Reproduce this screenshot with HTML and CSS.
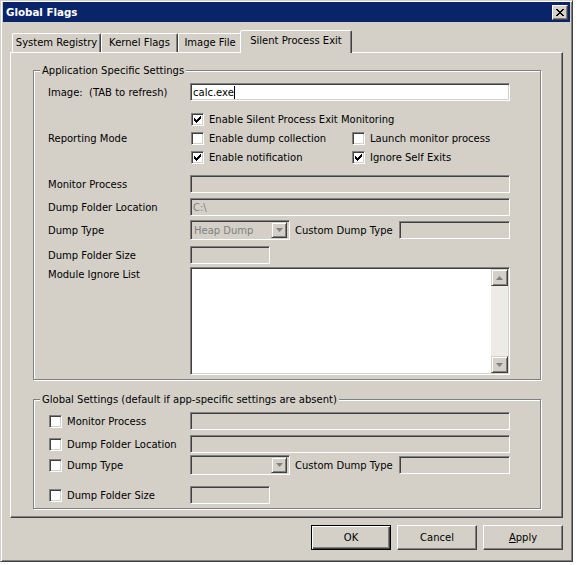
FILE: index.html
```html
<!DOCTYPE html>
<html lang="en">
<head>
<meta charset="utf-8">
<title>Global Flags</title>
<link rel="stylesheet" href="styles.css">
</head>
<body>
<div class="window">
  <div class="titlebar">
    <span class="title">Global Flags</span>
    <span class="close"><svg width="8" height="7" viewBox="0 0 8 7" shape-rendering="crispEdges"><path d="M0 0h2v1h1v1h2V1h1V0h2v1H7v1H6v1H5v1h1v1h1v1h1v1H6V6H5V5H3v1H2v1H0V6h1V5h1V4h1V3H2V2H1V1H0z"/></svg></span>
  </div>

  <div class="tabs">
    <div class="tab tab-system">System Registry</div>
    <div class="tab tab-kernel">Kernel Flags</div>
    <div class="tab tab-image">Image File</div>
    <div class="tab active">Silent Process Exit</div>
  </div>

  <div class="panel">
    <div class="group">
      <div class="group-title">Application Specific Settings</div>

      <div class="row r-image">
        <span class="lbl">Image:&nbsp; (TAB to refresh)</span>
        <div class="field white w-full"><span class="value">calc.exe</span><span class="caret"></span></div>
      </div>

      <div class="row r-report">
        <span class="lbl">Reporting Mode</span>
        <div class="checks">
          <div class="check span"><span class="cb"><svg class="tick" width="7" height="7" viewBox="0 0 7 7" shape-rendering="crispEdges"><polygon points="0,2 1,2 1,3 2,3 2,4 3,4 3,3 4,3 4,2 5,2 5,1 6,1 6,0 7,0 7,3 6,3 6,4 5,4 5,5 4,5 4,6 3,6 3,7 2,7 2,6 1,6 1,5 0,5"/></svg></span>Enable Silent Process Exit Monitoring</div>
          <div class="check"><span class="cb"></span>Enable dump collection</div>
          <div class="check"><span class="cb"></span>Launch monitor process</div>
          <div class="check"><span class="cb"><svg class="tick" width="7" height="7" viewBox="0 0 7 7" shape-rendering="crispEdges"><polygon points="0,2 1,2 1,3 2,3 2,4 3,4 3,3 4,3 4,2 5,2 5,1 6,1 6,0 7,0 7,3 6,3 6,4 5,4 5,5 4,5 4,6 3,6 3,7 2,7 2,6 1,6 1,5 0,5"/></svg></span>Enable notification</div>
          <div class="check"><span class="cb"><svg class="tick" width="7" height="7" viewBox="0 0 7 7" shape-rendering="crispEdges"><polygon points="0,2 1,2 1,3 2,3 2,4 3,4 3,3 4,3 4,2 5,2 5,1 6,1 6,0 7,0 7,3 6,3 6,4 5,4 5,5 4,5 4,6 3,6 3,7 2,7 2,6 1,6 1,5 0,5"/></svg></span>Ignore Self Exits</div>
        </div>
      </div>

      <div class="row r-monitor">
        <span class="lbl">Monitor Process</span>
        <div class="field w-full"></div>
      </div>

      <div class="row r-folder">
        <span class="lbl">Dump Folder Location</span>
        <div class="field w-full disabled-text"><span class="value">C:\</span></div>
      </div>

      <div class="row r-type">
        <span class="lbl">Dump Type</span>
        <div class="combo"><span class="value">Heap Dump</span><span class="drop"><svg width="7" height="4" viewBox="0 0 7 4"><polygon points="0,0 7,0 3.5,4" fill="#808080"/></svg></span></div>
        <span class="custom-lbl">Custom Dump Type</span>
        <div class="field w-custom"></div>
      </div>

      <div class="row r-size">
        <span class="lbl">Dump Folder Size</span>
        <div class="field w-size"></div>
      </div>

      <div class="row r-module">
        <span class="lbl">Module Ignore List</span>
        <div class="listbox">
          <div class="scrollbar">
            <span class="sb-btn"><svg width="7" height="4" viewBox="0 0 7 4"><polygon points="3.5,0 7,4 0,4" fill="#808080"/></svg></span>
            <span class="sb-track"></span>
            <span class="sb-btn"><svg width="7" height="4" viewBox="0 0 7 4"><polygon points="0,0 7,0 3.5,4" fill="#808080"/></svg></span>
          </div>
        </div>
      </div>
    </div>

    <div class="group">
      <div class="group-title">Global Settings (default if app-specific settings are absent)</div>

      <div class="row g-monitor">
        <span class="lbl with-cb"><span class="cb"></span>Monitor Process</span>
        <div class="field w-full"></div>
      </div>

      <div class="row g-folder">
        <span class="lbl with-cb"><span class="cb"></span>Dump Folder Location</span>
        <div class="field w-full"></div>
      </div>

      <div class="row g-type">
        <span class="lbl with-cb"><span class="cb"></span>Dump Type</span>
        <div class="combo"><span class="value"></span><span class="drop"><svg width="7" height="4" viewBox="0 0 7 4"><polygon points="0,0 7,0 3.5,4" fill="#808080"/></svg></span></div>
        <span class="custom-lbl">Custom Dump Type</span>
        <div class="field w-custom"></div>
      </div>

      <div class="row g-size">
        <span class="lbl with-cb"><span class="cb"></span>Dump Folder Size</span>
        <div class="field w-size"></div>
      </div>
    </div>
  </div>

  <div class="buttons">
    <div class="btn default">OK</div>
    <div class="btn">Cancel</div>
    <div class="btn"><span><u>A</u>pply</span></div>
  </div>
</div>
</body>
</html>
```

FILE: styles.css
```css
* { box-sizing: border-box; }

html, body {
  margin: 0;
  padding: 0;
}

body {
  background: #ffffff;
  font-family: "DejaVu Sans", Tahoma, Verdana, sans-serif;
  font-size: 10px;
  color: #000;
}

/* window frame */
.window {
  width: 573px;
  height: 562px;
  background: #d4d0c8;
  border: 1px solid;
  border-color: #d4d0c8 #404040 #404040 #d4d0c8;
  box-shadow: inset 1px 1px #ffffff, inset -1px -1px #808080;
  padding: 1px 2px 2px 2px;
  display: flex;
  flex-direction: column;
}

.titlebar {
  height: 20px;
  background: #0a246a;
  display: flex;
  align-items: center;
  justify-content: space-between;
  padding: 0 2px 0 3px;
}

.title {
  color: #fff;
  font-weight: bold;
  font-size: 10.3px;
}

.close {
  width: 16px;
  height: 15px;
  background: #d4d0c8;
  border: 1px solid;
  border-color: #ffffff #404040 #404040 #ffffff;
  box-shadow: inset -1px -1px #808080;
  display: flex;
  align-items: center;
  justify-content: center;
}

/* tabs */
.tabs {
  display: flex;
  align-items: flex-end;
  height: 22px;
  margin: 8px 0 0 9px;
}

.tab {
  height: 19px;
  line-height: 17px;
  text-align: center;
  border: 1px solid;
  border-bottom: 0;
  border-color: #ffffff #404040 transparent #ffffff;
  border-radius: 2px 2px 0 0;
  box-shadow: inset -1px 0 #808080;
  white-space: nowrap;
}

.tab-system { width: 89px; }
.tab-kernel { width: 77px; }
.tab-image { width: 64px; }

.tab.active {
  width: 112px;
  height: 23px;
  margin: 0 -2px -1px -2px;
  padding-top: 1px;
  line-height: 17px;
  position: relative;
  z-index: 1;
  background: #d4d0c8;
}

/* tab page */
.panel {
  margin-left: 7px;
  width: 553px;
  height: 466px;
  border: 1px solid;
  border-color: #ffffff #404040 #404040 #ffffff;
  box-shadow: inset -1px -1px #808080;
  padding: 17px 21px 8px 22px;
  display: flex;
  flex-direction: column;
  gap: 19px;
}

.group {
  border: 1px solid #808080;
  box-shadow: 1px 1px 0 #ffffff, inset 1px 1px 0 #ffffff;
  padding: 0 30px 4px 14px;
}

.group-title {
  display: block;
  width: max-content;
  margin: -7px 0 0 -8px;
  padding: 0 2px;
  line-height: 13px;
  background: #d4d0c8;
}

.row {
  display: flex;
  align-items: center;
}

.lbl {
  width: 142px;
  flex: none;
  line-height: 13px;
  white-space: nowrap;
}

.lbl.with-cb {
  display: flex;
  align-items: center;
  gap: 5px;
}

.r-image { margin-top: 6px; }
.r-report { margin-top: 9px; }
.r-monitor { margin-top: 8px; }
.r-folder { margin-top: 5px; }
.r-type { margin-top: 4px; }
.r-size { margin-top: 6px; }
.r-module { margin-top: 3px; align-items: flex-start; }
.r-module .lbl { padding-top: 1px; }

.g-monitor { margin-top: 6px; }
.g-folder { margin-top: 5px; }
.g-type { margin-top: 2px; }
.g-size { margin-top: 11px; }

/* sunken controls */
.field,
.combo,
.listbox,
.cb {
  border: 1px solid;
  border-color: #808080 #ffffff #ffffff #808080;
  box-shadow: inset 1px 1px #404040, inset -1px -1px #d4d0c8;
}

.field {
  height: 18px;
  background: #d4d0c8;
  display: flex;
  align-items: center;
  padding-left: 2px;
  line-height: 13px;
}

.field.white { background: #ffffff; }

.disabled-text { color: #808080; }

.caret {
  display: inline-block;
  width: 1px;
  height: 13px;
  background: #000;
}

.w-full { width: 320px; }
.w-size { width: 80px; }
.w-custom { width: 111px; }

.checks {
  display: grid;
  grid-template-columns: 161px auto;
  grid-auto-rows: 19px;
  align-items: center;
}

.check {
  display: flex;
  align-items: center;
  gap: 5px;
  white-space: nowrap;
}

.check.span { grid-column: 1 / -1; }

.cb {
  width: 13px;
  height: 13px;
  flex: none;
  margin-left: 1px;
  background: #ffffff;
  display: flex;
  align-items: center;
  justify-content: center;
}

.tick { display: block; }

.combo {
  width: 100px;
  height: 20px;
  background: #d4d0c8;
  color: #808080;
  display: flex;
  align-items: center;
  padding: 2px;
}

.combo .value { flex: 1; padding-left: 1px; }

.drop,
.sb-btn {
  width: 16px;
  height: 16px;
  flex: none;
  background: #d4d0c8;
  border: 1px solid;
  border-color: #d4d0c8 #404040 #404040 #d4d0c8;
  box-shadow: inset 1px 1px #ffffff, inset -1px -1px #808080;
  display: flex;
  align-items: center;
  justify-content: center;
}

.custom-lbl {
  flex: 1;
  margin-left: 5px;
  white-space: nowrap;
}

.listbox {
  width: 320px;
  height: 108px;
  background: #ffffff;
  padding: 1px;
  display: flex;
  justify-content: flex-end;
}

.scrollbar {
  width: 17px;
  display: flex;
  flex-direction: column;
  background: #ecebe6;
}

.sb-btn {
  width: 17px;
  height: 17px;
}

.sb-track { flex: 1; }

/* buttons */
.buttons {
  display: flex;
  justify-content: flex-end;
  gap: 6px;
  margin: 7px 7px 0 0;
}

.btn {
  width: 80px;
  height: 25px;
  background: #d4d0c8;
  border: 1px solid;
  border-color: #ffffff #404040 #404040 #ffffff;
  box-shadow: inset -1px -1px #808080;
  display: flex;
  align-items: center;
  justify-content: center;
}

.btn.default {
  border-color: #000;
  box-shadow: inset 1px 1px #ffffff, inset -1px -1px #404040, inset -2px -2px #808080;
}
```
